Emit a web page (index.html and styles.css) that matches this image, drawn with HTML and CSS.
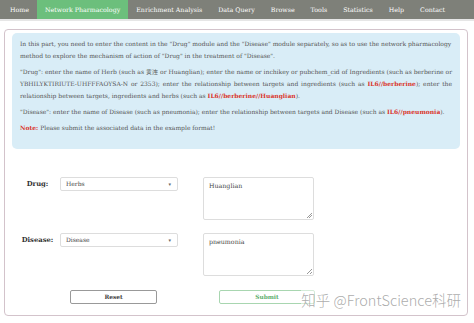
FILE: index.html
```html
<!DOCTYPE html>
<html lang="en">
<head>
    <meta charset="UTF-8">
    <title>Network Pharmacology</title>
    <link rel="stylesheet" href="styles.css">
</head>
<body>

<div class="nav">
    <a class="nav-item">Home</a>
    <a class="nav-item active">Network Pharmacology</a>
    <a class="nav-item">Enrichment Analysis</a>
    <a class="nav-item">Data Query</a>
    <a class="nav-item">Browse</a>
    <a class="nav-item">Tools</a>
    <a class="nav-item">Statistics</a>
    <a class="nav-item">Help</a>
    <a class="nav-item">Contact</a>
</div>

<div class="panel">
    <!-- 说明 -->
    <div class="info">
        <p>In this part, you need to enter the content in the "Drug" module and the "Disease" module separately, so as to use the network pharmacology method to explore the mechanism of action of "Drug" in the treatment of "Disease".</p>
        <p class="justify">"Drug": enter the name of Herb (such as 黄连 or Huanglian); enter the name or inchikey or pubchem_cid of Ingredients (such as berberine or YBHILYKTIRIUTE-UHFFFAOYSA-N or 2353); enter the relationship between targets and ingredients (such as <b class="red">IL6//berberine</b>); enter the relationship between targets, ingredients and herbs (such as <b class="red">IL6//berberine//Huanglian</b>).</p>
        <p>"Disease": enter the name of Disease (such as pneumonia); enter the relationship between targets and Disease (such as <b class="red">IL6//pneumonia</b>).</p>
        <p><b class="red">Note:</b> Please submit the associated data in the example format!</p>
    </div>

    <!-- 表单 -->
    <div class="form">
        <div class="row">
            <label>Drug:</label>
            <div class="select">Herbs<span class="caret">▾</span></div>
            <div class="area">Huanglian<span class="grip"></span></div>
        </div>
        <div class="row">
            <label>Disease:</label>
            <div class="select">Disease<span class="caret">▾</span></div>
            <div class="area">pneumonia<span class="grip"></span></div>
        </div>
        <div class="buttons">
            <button class="btn">Reset</button>
            <button class="btn submit">Submit</button>
        </div>
    </div>

    <div class="watermark">知乎 @FrontScience科研</div>
</div>

</body>
</html>
```

FILE: styles.css
```css
body {
    margin: 0;
    background-color: #fff;
    font-family: "DejaVu Serif", serif;
    color: #444;
}

.nav {
    display: flex;
    height: 19px;
    padding-left: 2px;
    background-color: #7e8079;
    border-bottom: 2px solid #e6e6e6;
}

.nav-item {
    display: flex;
    align-items: center;
    padding: 0 8px;
    font-size: 6.3px;
    color: #fff;
}

.nav-item.active {
    background-color: #6cbf7c;
}

.panel {
    position: relative;
    margin: 8px 6px 5px 4px;
    height: 287px;
    border: 1px solid #d3c3cb;
    border-radius: 4px;
    padding: 3px 7px 0 7px;
    box-sizing: border-box;
}

.info {
    background-color: #d9edf7;
    border-radius: 5px;
    padding: 5px 8px 8px 8px;
    height: 116px;
    box-sizing: border-box;
    font-size: 6px;
    line-height: 12px;
    color: #555;
}

.info p {
    margin: 0 0 4px 0;
}

.info b {
    line-height: 1;
}

.justify {
    text-align: justify;
}

.red {
    color: #d9342b;
}

.form {
    padding-top: 28px;
}

.row {
    display: grid;
    grid-template-columns: 43px 118px 131px;
    column-gap: 5px;
    align-items: start;
    margin-bottom: 13px;
}

.row label {
    text-align: center;
    padding-left: 8px;
    font-size: 6.8px;
    font-weight: bold;
    color: #333;
    padding-top: 3px;
}

.row .area {
    margin-left: 20px;
}

.select {
    position: relative;
    height: 14px;
    border: 1px solid #ddd;
    border-radius: 2px;
    box-sizing: border-box;
    padding-left: 5px;
    font-size: 6px;
    line-height: 12px;
    color: #444;
}

.caret {
    position: absolute;
    right: 6px;
    top: 0;
    font-size: 5px;
    color: #666;
}

.area {
    position: relative;
    height: 43px;
    border: 1px solid #ddd;
    border-radius: 2px;
    box-sizing: border-box;
    padding: 4px 5px;
    font-size: 6.3px;
    color: #444;
}

.grip {
    position: absolute;
    right: 1px;
    bottom: 1px;
    width: 5px;
    height: 5px;
    background: linear-gradient(135deg, transparent 45%, #999 45%, #999 55%, transparent 55%, transparent 70%, #999 70%, #999 80%, transparent 80%);
}

.buttons {
    display: flex;
    padding-top: 1px;
    margin-left: 58px;
}

.btn {
    width: 87px;
    height: 14px;
    padding: 0;
    background-color: #fff;
    border: 1px solid #999;
    border-radius: 2px;
    font-family: "DejaVu Serif", serif;
    font-size: 5.8px;
    font-weight: bold;
    color: #444;
}

.btn.submit {
    width: 96px;
    margin-left: 62px;
    border-color: #a8d6b0;
    color: #5cae6c;
}

.watermark {
    position: absolute;
    right: 6px;
    bottom: 5px;
    font-family: "Noto Sans CJK SC", "DejaVu Sans", sans-serif;
    font-size: 14.5px;
    font-weight: 300;
    color: rgba(150, 150, 150, 0.8);
    background-color: rgba(255, 255, 255, 0.5);
}
```
